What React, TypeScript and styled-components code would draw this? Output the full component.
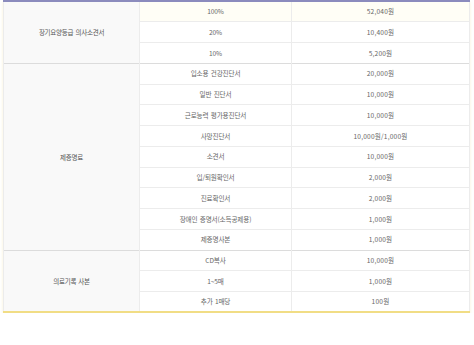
import styled, { createGlobalStyle } from "styled-components";

type Row = { item: string; price: string };
type Group = { title: string; rows: Row[] };

const groups: Group[] = [
  {
    title: "장기요양등급 의사소견서",
    rows: [
      { item: "100%", price: "52,040원" },
      { item: "20%", price: "10,400원" },
      { item: "10%", price: "5,200원" },
    ],
  },
  {
    title: "제증명료",
    rows: [
      { item: "입소용 건강진단서", price: "20,000원" },
      { item: "일반 진단서", price: "10,000원" },
      { item: "근로능력 평가용진단서", price: "10,000원" },
      { item: "사망진단서", price: "10,000원/1,000원" },
      { item: "소견서", price: "10,000원" },
      { item: "입/퇴원확인서", price: "2,000원" },
      { item: "진료확인서", price: "2,000원" },
      { item: "장애인 증명서(소득공제용)", price: "1,000원" },
      { item: "제증명사본", price: "1,000원" },
    ],
  },
  {
    title: "의료기록 사본",
    rows: [
      { item: "CD복사", price: "10,000원" },
      { item: "1~5매", price: "1,000원" },
      { item: "추가 1매당", price: "100원" },
    ],
  },
];

export default function App() {
  return (
    <>
      <Global />
      <Wrap>
        <Table>
          <colgroup>
            <col style={{ width: 136 }} />
            <col style={{ width: 152 }} />
            <col />
          </colgroup>
          {groups.map((g, gi) => (
            <Body key={g.title}>
              {g.rows.map((r, ri) => (
                <Tr key={r.item} $first={ri === 0} $hl={gi === 0 && ri === 0}>
                  {ri === 0 && <Title rowSpan={g.rows.length}>{g.title}</Title>}
                  <Cell>{r.item}</Cell>
                  <Cell $price>{r.price}</Cell>
                </Tr>
              ))}
            </Body>
          ))}
        </Table>
      </Wrap>
    </>
  );
}

const Global = createGlobalStyle`
  html, body {
    margin: 0;
    background: #fff;
  }
`;

const Wrap = styled.div`
  padding: 0 4px 0 3px;
  font-family: "Noto Sans CJK KR", "Noto Sans", sans-serif;
`;

const Table = styled.table`
  width: 100%;
  border-collapse: collapse;
  table-layout: fixed;
  border-top: 2px solid #8b8bbd;
  border-bottom: 2px solid #f1dd85;
  box-shadow: 0 2px 3px rgba(240, 222, 140, 0.35);
`;

const Body = styled.tbody`
  border-top: 1px solid #dcdcdc;
  &:first-of-type {
    border-top: none;
  }
`;

const Tr = styled.tr<{ $first: boolean; $hl: boolean }>`
  height: 20.75px;
  border-top: ${(p) => (p.$first ? "none" : "1px solid #ececec")};
  background: ${(p) => (p.$hl ? "#fffef6" : "#fff")};
`;

const Title = styled.td`
  background: #f9f9f9;
  border-left: 1px solid #ececec;
  border-right: 1px solid #ececec;
  text-align: center;
  font-size: 6.5px;
  color: #555;
  letter-spacing: -0.25px;
  word-spacing: 1px;
  padding: 0;
`;

const Cell = styled.td<{ $price?: boolean }>`
  text-align: center;
  font-size: 6.6px;
  color: #666;
  letter-spacing: ${(p) => (p.$price ? "0.2px" : "-0.15px")};
  word-spacing: 1px;
  padding: 0;
  line-height: 1;
  border-right: 1px solid #ececec;
`;
